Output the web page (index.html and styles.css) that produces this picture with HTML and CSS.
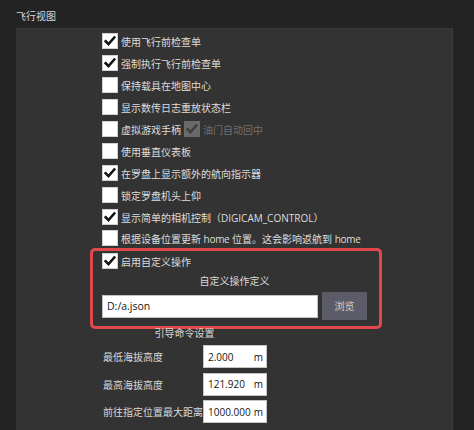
FILE: index.html
```html
<!DOCTYPE html>
<html lang="zh-CN">
<head>
<meta charset="utf-8">
<link rel="stylesheet" href="styles.css">
</head>
<body>
<div class="title">飞行视图</div>
<div class="panel">
  <div class="col">
    <div class="row h22"><span class="cb"><svg viewBox="0 0 16 16"><path d="M3 8.2 L6.3 11.6 L12.9 4"/></svg></span><span class="lbl">使用飞行前检查单</span></div>
    <div class="row h22"><span class="cb"><svg viewBox="0 0 16 16"><path d="M3 8.2 L6.3 11.6 L12.9 4"/></svg></span><span class="lbl">强制执行飞行前检查单</span></div>
    <div class="row h22"><span class="cb"></span><span class="lbl">保持载具在地图中心</span></div>
    <div class="row h22"><span class="cb"></span><span class="lbl">显示数传日志重放状态栏</span></div>
    <div class="row h22"><span class="cb"></span><span class="lbl">虚拟游戏手柄</span><span class="cb dis"><svg viewBox="0 0 16 16"><path d="M3 8.2 L6.3 11.6 L12.9 4"/></svg></span><span class="lbl dim">油门自动回中</span></div>
    <div class="row h22"><span class="cb"></span><span class="lbl">使用垂直仪表板</span></div>
    <div class="row h22"><span class="cb"><svg viewBox="0 0 16 16"><path d="M3 8.2 L6.3 11.6 L12.9 4"/></svg></span><span class="lbl">在罗盘上显示额外的航向指示器</span></div>
    <div class="row h22"><span class="cb"></span><span class="lbl">锁定罗盘机头上仰</span></div>
    <div class="row h22"><span class="cb"><svg viewBox="0 0 16 16"><path d="M3 8.2 L6.3 11.6 L12.9 4"/></svg></span><span class="lbl">显示简单的相机控制（DIGICAM_CONTROL）</span></div>
    <div class="row h20"><span class="cb"></span><span class="lbl">根据设备位置更新 <span class="lat">home</span> 位置。这会影响返航到 <span class="lat">home</span></span></div>

    <div class="custom">
      <div class="row h20"><span class="cb"><svg viewBox="0 0 16 16"><path d="M3 8.2 L6.3 11.6 L12.9 4"/></svg></span><span class="lbl">启用自定义操作</span></div>
      <div class="sub">自定义操作定义</div>
      <div class="filerow">
        <div class="file">D:/a.json</div>
        <div class="btn">浏览</div>
      </div>
    </div>

    <div class="guide">
      <div class="ghead">引导命令设置</div>
      <div class="grid">
        <div class="glbl">最低海拔高度</div>
        <div class="num"><span>2.000</span><span>m</span></div>
        <div class="glbl">最高海拔高度</div>
        <div class="num"><span>121.920</span><span>m</span></div>
        <div class="glbl">前往指定位置最大距离</div>
        <div class="num"><span>1000.000</span><span>m</span></div>
      </div>
    </div>
  </div>
</div>
</body>
</html>
```

FILE: styles.css
```css
html, body {
  margin: 0;
  padding: 0;
  background: #232323;
  height: 430px;
  overflow: hidden;
}
body {
  font-family: "Open Sans", "Noto Sans CJK SC", sans-serif;
  font-size: 10px;
  color: #dcdcdc;
}
.title {
  box-sizing: border-box;
  height: 28px;
  padding: 9px 0 0 16px;
  line-height: 14px;
  color: #d6d6d6;
}
.panel {
  box-sizing: border-box;
  margin-left: 16px;
  width: 437px;
  height: 402px;
  background: #333333;
  border-top: 1px solid #3a3a3a;
  border-right: 1px solid #3c3c3c;
  padding: 1px 0 0 86px;
}
.col {
  display: flex;
  flex-direction: column;
}
.row {
  display: flex;
  align-items: center;
  white-space: nowrap;
}
.h22 { height: 22px; }
.h20 { height: 20px; }
.cb {
  box-sizing: border-box;
  width: 16px;
  height: 16px;
  background: #ffffff;
  border: 1px solid #d0d0d0;
  flex: none;
  display: flex;
}
.cb svg {
  width: 14px;
  height: 14px;
}
.cb path {
  fill: none;
  stroke: #111111;
  stroke-width: 2.9;
  stroke-linecap: square;
}
.cb.dis {
  background: #6a6a6a;
  border-color: #6a6a6a;
  margin-left: 3px;
}
.cb.dis path {
  stroke: #3e3e3e;
}
.lbl {
  margin-left: 3px;
  color: #dedede;
}
.lat {
  letter-spacing: -0.3px;
}
.lbl.dim {
  color: #707070;
}
.custom {
  box-sizing: border-box;
  width: 292px;
  height: 81px;
  margin-left: -12px;
  border: 3px solid #e0484b;
  border-radius: 5px;
  padding: 0 12px 0 9px;
  display: flex;
  flex-direction: column;
}
.sub {
  height: 20px;
  line-height: 20px;
  text-align: center;
  color: #dcdcdc;
}
.filerow {
  margin-top: 1px;
  height: 28px;
  display: flex;
  align-items: center;
  gap: 4px;
}
.file {
  box-sizing: border-box;
  width: 216px;
  height: 23px;
  background: #ffffff;
  border: 1px solid #c4c4c4;
  color: #151515;
  line-height: 21px;
  padding-left: 4px;
  font-size: 10.5px;
}
.btn {
  width: 45px;
  height: 28px;
  background: #5c5c68;
  color: #cfcfd4;
  line-height: 28px;
  text-align: center;
}
.guide {
  width: 165px;
  display: flex;
  flex-direction: column;
}
.ghead {
  margin-top: -2px;
  line-height: 12px;
  height: 12px;
  text-align: center;
  color: #d8d8d8;
}
.grid {
  margin-top: 6px;
  display: grid;
  grid-template-columns: 1fr 64px;
  grid-auto-rows: 23px;
  row-gap: 4.5px;
  align-items: center;
}
.glbl {
  color: #d8d8d8;
  white-space: nowrap;
  padding-left: 1px;
}
.num {
  box-sizing: border-box;
  height: 23px;
  background: #ffffff;
  border: 1px solid #c4c4c4;
  color: #151515;
  display: flex;
  justify-content: space-between;
  align-items: center;
  padding: 0 3px 0 4px;
  font-size: 10px;
}
```
